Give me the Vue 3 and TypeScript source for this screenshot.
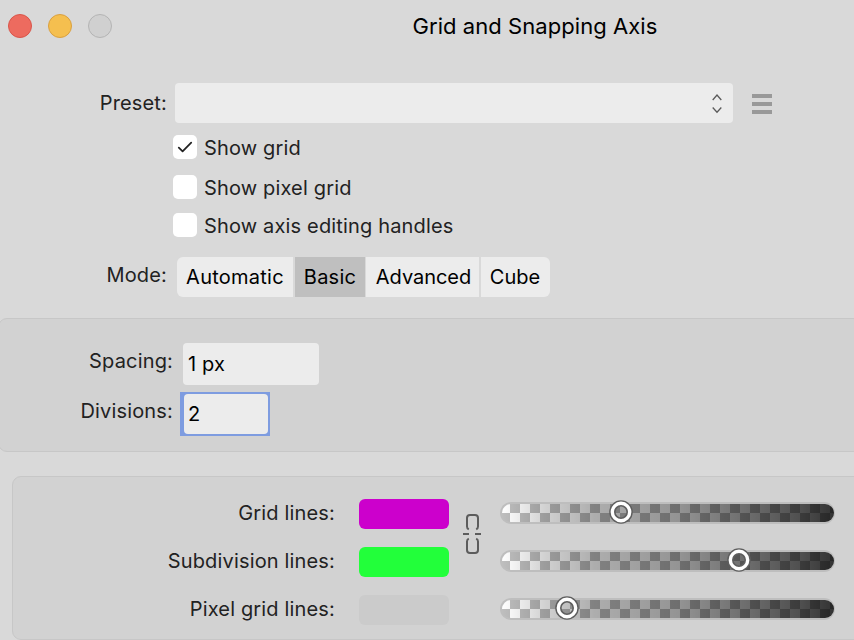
<script setup lang="ts">
import { ref } from 'vue'

interface LineSetting {
  label: string
  color: string
  opacity: number
}

const options = ref([
  { label: 'Show grid', checked: true },
  { label: 'Show pixel grid', checked: false },
  { label: 'Show axis editing handles', checked: false },
])

const modes = ['Automatic', 'Basic', 'Advanced', 'Cube']
const mode = ref('Basic')

const lines = ref<LineSetting[]>([
  { label: 'Grid lines:', color: '#cc00cc', opacity: 120.7 },
  { label: 'Subdivision lines:', color: '#22ff3a', opacity: 239.3 },
  { label: 'Pixel grid lines:', color: '#cbcbcb', opacity: 67 },
])
</script>

<template>
  <div class="window">
    <header class="titlebar">
      <div class="lights">
        <span class="light close"></span>
        <span class="light minimise"></span>
        <span class="light zoom"></span>
      </div>
      <h1>Grid and Snapping Axis</h1>
    </header>

    <div class="preset">
      <span class="label">Preset:</span>
      <div class="select">
        <svg width="12" height="22" viewBox="0 0 12 22" fill="none" stroke="#5a5a5a" stroke-width="1.3">
          <path d="M1.7 8 6 3l4.3 5M1.7 15.5 6 20.3l4.3-4.8" />
        </svg>
      </div>
      <div class="menu"><i></i><i></i><i></i></div>
    </div>

    <div class="options">
      <label v-for="o in options" :key="o.label" class="option" @click="o.checked = !o.checked">
        <span class="box">
          <svg v-if="o.checked" width="24" height="24" viewBox="0 0 24 24" fill="none" stroke="#222" stroke-width="1.8" stroke-linecap="round" stroke-linejoin="round">
            <path d="M5.8 12.7 9.6 16.3 18.2 7.7" />
          </svg>
        </span>
        <span class="name">{{ o.label }}</span>
      </label>
    </div>

    <div class="mode">
      <span class="label">Mode:</span>
      <div class="segments">
        <button v-for="m in modes" :key="m" :class="[m.toLowerCase(), { active: m === mode }]" @click="mode = m">
          {{ m }}
        </button>
      </div>
    </div>

    <section class="panel spacing">
      <div class="field">
        <span class="label">Spacing:</span>
        <div class="input">1 px</div>
      </div>
      <div class="field divisions">
        <span class="label">Divisions:</span>
        <div class="focus"><div class="input">2</div></div>
      </div>
    </section>

    <section class="panel colours">
      <div class="names">
        <span v-for="l in lines" :key="l.label" class="label">{{ l.label }}</span>
      </div>
      <div class="swatches">
        <span v-for="l in lines" :key="l.label" class="swatch" :style="{ background: l.color }"></span>
      </div>
      <svg class="link" width="20" height="42" viewBox="0 0 20 42" fill="none" stroke="#5c5c5c" stroke-width="2">
        <path d="M6.8 16.4Q5 15.5 5 13.5V5Q5 2 8 2h5q3 0 3 3v8.5q0 2-1.8 2.9M6.8 25.6Q5 26.5 5 28.5V37q0 3 3 3h5q3 0 3-3v-8.5q0-2-1.8-2.9M1 21h6M13 21h6" />
      </svg>
      <div class="sliders">
        <div v-for="l in lines" :key="l.label" class="slider">
          <div class="track"></div>
          <svg class="knob" :style="{ left: l.opacity + 'px' }" width="26" height="26" viewBox="0 0 26 26" fill="none">
            <circle cx="13" cy="13" r="8.6" stroke="#5e5e5e" stroke-width="6.4" />
            <circle cx="13" cy="13" r="8.7" stroke="#fff" stroke-width="3.4" />
          </svg>
        </div>
      </div>
    </section>
  </div>
</template>

<style>
body {
  margin: 0;
  overflow: hidden;
  background: #d9d9d9;
}
</style>

<style scoped>
.window {
  box-sizing: border-box;
  width: 854px;
  height: 640px;
  overflow: hidden;
  background: #d9d9d9;
  color: #222;
  font: 400 20px/24px Inter, "Liberation Sans", sans-serif;
  letter-spacing: 0.16px;
  white-space: nowrap;
}
.titlebar {
  display: flex;
  height: 83px;
}
.lights {
  display: flex;
  gap: 16px;
  padding: 14px 0 0 8px;
}
.light {
  box-sizing: border-box;
  width: 24px;
  height: 24px;
  border: 1px solid #d9554a;
  border-radius: 50%;
  background: #ed6b5f;
}
.minimise {
  border-color: #d9a040;
  background: #f5bf4f;
}
.zoom {
  border-color: #b4b4b4;
  background: #d0d0d0;
}
h1 {
  margin: 13px 0 0 300.5px;
  color: #000;
  font-size: 22px;
  font-weight: 400;
  line-height: 26px;
  letter-spacing: 0.06px;
}
.preset {
  display: flex;
  height: 40px;
}
.preset .label {
  width: 167px;
  margin: 8px 8px 0 0;
  text-align: right;
}
.select {
  display: flex;
  align-items: center;
  justify-content: flex-end;
  box-sizing: border-box;
  width: 558px;
  padding-right: 10px;
  border-radius: 4px;
  background: #ececec;
}
.menu {
  display: flex;
  flex-direction: column;
  gap: 4px;
  padding: 11px 0 0 19px;
}
.menu i {
  width: 20px;
  height: 4px;
  background: #999;
}
.options {
  display: flex;
  flex-direction: column;
  gap: 16px;
  padding: 12px 0 0 173px;
}
.option {
  display: flex;
  gap: 7px;
  height: 24px;
}
.option:last-child {
  margin-top: -2px;
}
.box {
  width: 24px;
  height: 24px;
  border-radius: 5px;
  background: #fff;
}
.name {
  padding-top: 1px;
}
.mode {
  display: flex;
  height: 40px;
  margin-top: 20px;
}
.mode .label {
  width: 167px;
  margin: 6px 10px 0 0;
  text-align: right;
}
.segments {
  display: flex;
  overflow: hidden;
  width: 373px;
  border-radius: 6px;
  background: #d9d9d9;
}
button {
  flex: none;
  width: 116px;
  margin: 0 1.5px 0 0;
  padding: 0;
  border: 0;
  background: #ececec;
  color: #000;
  font: inherit;
  letter-spacing: 0.25px;
}
button.basic {
  width: 70px;
  padding-left: 1px;
}
button.advanced {
  width: 113px;
  padding-left: 2px;
  letter-spacing: -0.05px;
}
button.cube {
  width: 69px;
  margin-right: 0;
  letter-spacing: 0;
}
button.active {
  background: #bfbfbf;
}
.panel {
  box-sizing: border-box;
  border: 1px solid #c7c7c7;
  border-radius: 9px;
  background: #d2d2d2;
}
.spacing {
  width: 864px;
  height: 134px;
  margin: 21px 0 0 -2px;
  padding: 24px 0 0 1px;
}
.field {
  display: flex;
}
.field .label {
  width: 173px;
  margin: 6px 10px 0 0;
  text-align: right;
}
.input {
  box-sizing: border-box;
  width: 136px;
  height: 42px;
  padding: 9px 0 0 5px;
  border-radius: 4px;
  background: #ececec;
  color: #000;
}
.divisions {
  margin-top: 7px;
}
.divisions .label {
  margin: 7px 7px 0 0;
}
.focus {
  width: 84px;
  padding: 2px 2px 2px 4px;
  background: #7e9ce0;
}
.focus .input {
  width: 84px;
  height: 40px;
  padding: 8px 0 0 4px;
}
.colours {
  display: flex;
  width: 864px;
  height: 164px;
  margin: 24px 0 0 12px;
  padding-top: 22px;
}
.names {
  display: flex;
  flex-direction: column;
  gap: 24px;
  width: 322px;
  padding-top: 2px;
  text-align: right;
}
.swatches {
  display: flex;
  flex-direction: column;
  gap: 18px;
  margin-left: 24px;
}
.swatch {
  width: 90px;
  height: 30px;
  border-radius: 6px;
}
.link {
  margin: 14px 0 0 13px;
}
.sliders {
  display: flex;
  flex-direction: column;
  gap: 26px;
  margin: 3px 0 0 18px;
}
.slider {
  position: relative;
  box-sizing: border-box;
  width: 335px;
  height: 22px;
  padding: 2px 1px 2px 2px;
  border-radius: 11px;
  background: #bebebe;
}
.track {
  height: 18px;
  border-radius: 9px;
  background:
    linear-gradient(
      90deg,
      rgba(0, 0, 0, 0),
      rgba(0, 0, 0, 0.18) 13%,
      rgba(0, 0, 0, 0.32) 28%,
      rgba(0, 0, 0, 0.42) 53%,
      rgba(0, 0, 0, 0.56) 72%,
      rgba(0, 0, 0, 0.69) 90%,
      rgba(0, 0, 0, 0.8)
    ),
    repeating-conic-gradient(#bebebe 0 25%, #fff 0 50%) -2px 0 / 20px 18px;
}
.knob {
  position: absolute;
  top: -2.7px;
  transform: translateX(-50%);
}
</style>
